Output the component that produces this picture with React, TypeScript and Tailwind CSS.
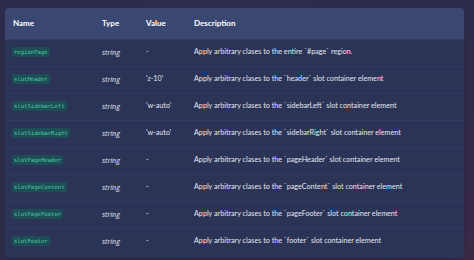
const rows = [
  { name: "regionPage", value: "-", desc: "Apply arbitrary clases to the entire `#page` region." },
  { name: "slotHeader", value: "'z-10'", desc: "Apply arbitrary clases to the `header` slot container element" },
  { name: "slotSidebarLeft", value: "'w-auto'", desc: "Apply arbitrary clases to the `sidebarLeft` slot container element" },
  { name: "slotSidebarRight", value: "'w-auto'", desc: "Apply arbitrary clases to the `sidebarRight` slot container element" },
  { name: "slotPageHeader", value: "-", desc: "Apply arbitrary clases to the `pageHeader` slot container element" },
  { name: "slotPageContent", value: "-", desc: "Apply arbitrary clases to the `pageContent` slot container element" },
  { name: "slotPageFooter", value: "-", desc: "Apply arbitrary clases to the `pageFooter` slot container element" },
  { name: "slotFooter", value: "-", desc: "Apply arbitrary clases to the `footer` slot container element" },
];

export default function App() {
  return (
    <div
      className="w-[474px] h-[260px] overflow-hidden bg-gradient-to-br from-[#2e2c4c] via-[#2c2d4b] to-[#3a2a48] pl-[5px] pr-[10px] pt-[8px]"
      style={{ fontFamily: "Lato, 'Open Sans', sans-serif" }}
    >
      <div className="w-[459px] rounded-[4px] bg-[#2b3456] overflow-hidden pb-[3px] shadow-lg">
        <table className="w-full border-collapse text-[7.2px] text-[#e4e7f0]">
          <thead>
            <tr className="h-[31px] bg-[#394771] text-left text-[8px] font-bold text-white">
              <th className="w-[97px] pl-[8px]">Name</th>
              <th className="w-[44px]">Type</th>
              <th className="w-[48px]">Value</th>
              <th>Description</th>
            </tr>
          </thead>
          <tbody>
            {rows.map((r) => (
              <tr key={r.name} className="h-[27px] border-t border-[#323c60]">
                <td className="pl-[7px]">
                  <code
                    className="rounded-[2px] bg-[#1e4e55] px-[2px] py-[2px] text-[5.6px] text-[#4ccaa6]"
                    style={{ fontFamily: "'DejaVu Sans Mono', monospace" }}
                  >
                    {r.name}
                  </code>
                </td>
                <td>
                  <span className="italic" style={{ fontFamily: "'Open Sans', sans-serif" }}>
                    string
                  </span>
                </td>
                <td>{r.value}</td>
                <td>{r.desc}</td>
              </tr>
            ))}
          </tbody>
        </table>
      </div>
    </div>
  );
}
